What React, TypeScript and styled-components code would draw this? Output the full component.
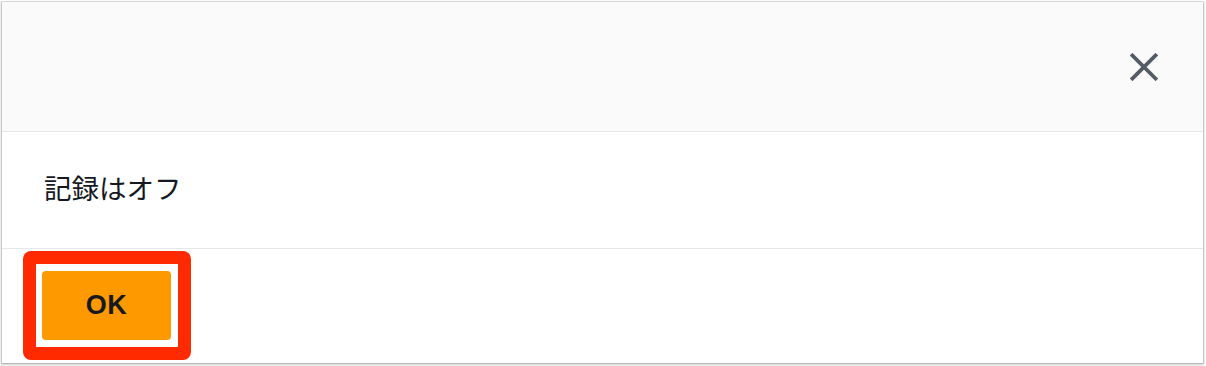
import styled, { createGlobalStyle } from "styled-components";

const GlobalStyle = createGlobalStyle`
  html, body {
    margin: 0;
    padding: 0;
    background: #ffffff;
  }
  body {
    font-family: "Liberation Sans", "Noto Sans CJK JP", sans-serif;
  }
`;

const Page = styled.div`
  width: 1206px;
  height: 366px;
  box-sizing: border-box;
  padding: 2px 3px 3px 2px;
  background: #ffffff;
`;

const Modal = styled.div`
  display: flex;
  flex-direction: column;
  height: 100%;
  background: #ffffff;
  box-shadow: 0 1px 2px 1px rgba(0, 0, 0, 0.2), 0 0 0 1px #e3e6e6;
`;

const Header = styled.div`
  display: flex;
  align-items: center;
  justify-content: flex-end;
  height: 129px;
  padding: 0 45px 0 0;
  background: #fafafa;
  border-bottom: 1px solid #e4e8e8;
`;

const CloseButton = styled.button`
  display: flex;
  align-items: center;
  justify-content: center;
  padding: 0;
  border: none;
  background: transparent;
  cursor: pointer;
  color: #545b64;
`;

const Body = styled.div`
  display: flex;
  align-items: center;
  height: 117px;
  padding: 0 0 6px 42px;
  box-sizing: border-box;
  border-bottom: 1px solid #e4e8e8;
  font-family: "Noto Sans CJK JP", sans-serif;
  font-size: 27.5px;
  color: #16191f;
`;

const Footer = styled.div`
  flex: 1;
  display: flex;
  align-items: flex-start;
  padding: 2px 0 0 21px;
`;

const Highlight = styled.div`
  display: flex;
  box-sizing: border-box;
  width: 168px;
  height: 109px;
  padding: 7px 7px 7px 6px;
  border: 13px solid #ff2a00;
  border-radius: 8px;
`;

const PrimaryButton = styled.button`
  flex: 1;
  border: none;
  border-radius: 4px;
  background: #ff9900;
  color: #16191f;
  font-family: "Liberation Sans", "DejaVu Sans", sans-serif;
  font-weight: 700;
  font-size: 27px;
  letter-spacing: 0.5px;
  cursor: pointer;
`;

export default function App() {
  return (
    <>
      <GlobalStyle />
      <Page>
        <Modal>
          <Header>
            <CloseButton aria-label="閉じる">
              <svg width="28" height="28" viewBox="0 0 28 28">
                <path
                  d="M2.5 2.5 L25.5 25.5 M25.5 2.5 L2.5 25.5"
                  stroke="currentColor"
                  strokeWidth="3.8"
                  strokeLinecap="square"
                />
              </svg>
            </CloseButton>
          </Header>
          <Body>記録はオフ</Body>
          <Footer>
            <Highlight>
              <PrimaryButton>OK</PrimaryButton>
            </Highlight>
          </Footer>
        </Modal>
      </Page>
    </>
  );
}
